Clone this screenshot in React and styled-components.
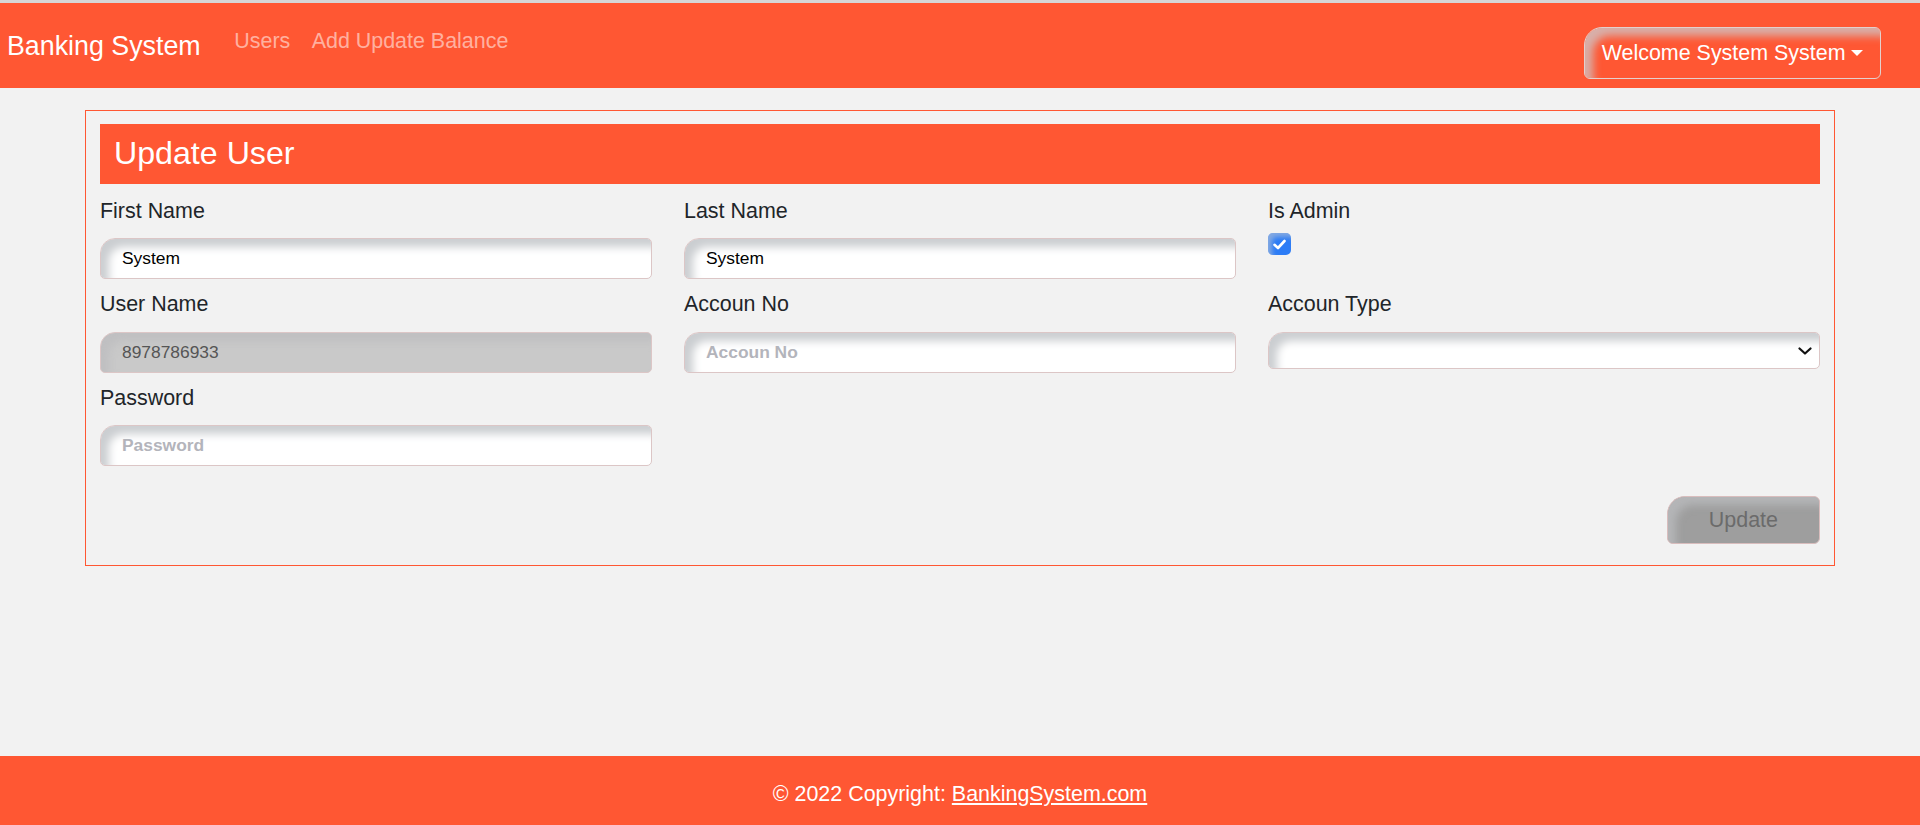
import React from 'react';
import styled, { createGlobalStyle } from 'styled-components';

const ORANGE = '#ff5733';
const FONT = '"Liberation Sans", Arial, Helvetica, sans-serif';
const INSET = 'inset 8px 8px 8px #cbced1';

const GlobalStyle = createGlobalStyle`
    html, body {
        margin: 0;
        padding: 0;
        overflow: hidden;
    }
    body {
        background: #f2f2f2;
        font-family: ${FONT};
        color: #212529;
    }
    *, *::before, *::after {
        box-sizing: border-box;
    }
`;

const Page = styled.div`
    display: flex;
    flex-direction: column;
    height: 825px;
    border-top: 3px solid #d6d6d6;
`;

const Navbar = styled.nav`
    flex: 0 0 85px;
    display: flex;
    align-items: flex-start;
    padding: 21px 39px 0 7px;
    background: ${ORANGE};
`;

const Brand = styled.a`
    margin: 2px 23px 0 0;
    font-size: 26.8px;
    line-height: 40px;
    color: #fff;
    text-decoration: none;
    white-space: nowrap;
`;

const NavLinks = styled.div`
    display: flex;
    margin-top: 1px;
`;

const NavLink = styled.a`
    padding: 0 10.7px;
    font-size: 21.44px;
    line-height: 32px;
    color: rgba(255, 255, 255, 0.55);
    text-decoration: none;
    white-space: nowrap;
`;

const UserMenu = styled.button`
    display: flex;
    align-items: center;
    height: 52px;
    margin: 3px 0 0 auto;
    padding: 9px 17px;
    border: 1px solid rgba(225, 222, 222, 0.9);
    border-radius: 18px 6px 6px 6px;
    background: transparent;
    box-shadow: inset 8px 8px 8px rgba(203, 206, 209, 0.75);
    font-family: ${FONT};
    font-size: 21.44px;
    line-height: 32px;
    color: #fff;
    cursor: pointer;
`;

const Caret = styled.span`
    display: inline-block;
    margin-left: 5.5px;
    border-top: 6.4px solid #fff;
    border-left: 6.4px solid transparent;
    border-right: 6.4px solid transparent;
`;

const Main = styled.main`
    flex: 1;
    padding-top: 22px;
`;

const Card = styled.section`
    width: 1750px;
    margin: 0 auto;
    padding: 13px 14px 21px;
    border: 1px solid ${ORANGE};
`;

const CardTitle = styled.h4`
    height: 60px;
    margin: 0;
    padding: 9.5px 14px;
    background: ${ORANGE};
    font-size: 32.16px;
    font-weight: 400;
    line-height: 38.6px;
    color: #fff;
`;

const FormGrid = styled.form`
    display: grid;
    grid-template-columns: repeat(3, 552px);
    column-gap: 32px;
    align-items: start;
    padding-top: 10.5px;
`;

const Field = styled.div`
    display: flex;
    flex-direction: column;
    margin-bottom: 9px;
`;

const Label = styled.label`
    margin-bottom: ${props => props.$gap || '11.5px'};
    font-size: 21.44px;
    line-height: 32px;
    color: #212529;
`;

const TextInput = styled.input`
    width: 100%;
    height: 41px;
    padding: 0 21px;
    border: 1px solid #dcc6c6;
    border-radius: 15px 5px 5px 5px;
    background: #fff;
    box-shadow: ${INSET};
    font-family: ${FONT};
    font-size: 17.4px;
    color: #000;
    outline: none;

    &::placeholder {
        color: #b3b4bb;
        font-weight: 700;
    }

    &:disabled {
        background: #c9c9c9;
        box-shadow: inset 8px 8px 8px rgba(185, 185, 188, 0.6);
        color: #555;
    }
`;

const CheckBox = styled.span`
    display: flex;
    align-items: center;
    justify-content: center;
    width: 23px;
    height: 22px;
    border-radius: 5px;
    background: #2c7cf6;
    box-shadow: inset 4px 4px 5px rgba(203, 206, 209, 0.55);
`;

const SelectWrap = styled.div`
    position: relative;
    width: 100%;
`;

const Select = styled.select`
    display: block;
    width: 100%;
    height: 37px;
    padding: 0 30px 0 21px;
    border: 1px solid #dcc6c6;
    border-radius: 15px 5px 5px 5px;
    background: #fff;
    box-shadow: ${INSET};
    font-family: ${FONT};
    font-size: 17.4px;
    appearance: none;
    outline: none;
`;

const Chevron = styled.svg`
    position: absolute;
    right: 8px;
    top: 15px;
    pointer-events: none;
`;

const Actions = styled.div`
    grid-column: 1 / -1;
    display: flex;
    justify-content: flex-end;
    margin-top: 21px;
`;

const SubmitButton = styled.button`
    height: 48px;
    padding: 7px 41px;
    border: 1px solid #d9bdbd;
    border-radius: 18px 6px 6px 6px;
    background: #9e9e9e;
    box-shadow: inset 8px 8px 8px rgba(203, 206, 209, 0.5);
    font-family: ${FONT};
    font-size: 21.44px;
    line-height: 32px;
    color: #6b6b6b;
`;

const Footer = styled.footer`
    flex: 0 0 69px;
    padding-top: 21.5px;
    background: ${ORANGE};
    text-align: center;
    font-size: 21.44px;
    line-height: 32px;
    color: #fff;

    a {
        color: #fff;
        text-decoration: underline;
    }
`;

const TextField = ({ label, ...inputProps }) => (
    <Field>
        <Label>{label}</Label>
        <TextInput {...inputProps} />
    </Field>
);

const App = () => (
    <>
        <GlobalStyle />
        <Page>
            <Navbar>
                <Brand href="#">Banking System</Brand>
                <NavLinks>
                    <NavLink href="#">Users</NavLink>
                    <NavLink href="#">Add Update Balance</NavLink>
                </NavLinks>
                <UserMenu type="button">
                    Welcome System System
                    <Caret />
                </UserMenu>
            </Navbar>

            <Main>
                <Card>
                    <CardTitle>Update User</CardTitle>
                    <FormGrid onSubmit={e => e.preventDefault()}>
                        <TextField label="First Name" defaultValue="System" />
                        <TextField label="Last Name" defaultValue="System" />
                        <Field>
                            <Label $gap="6.5px">Is Admin</Label>
                            <CheckBox role="checkbox" aria-checked="true">
                                <svg width="13" height="11" viewBox="0 0 13 11">
                                    <path d="M1.5 5.8 L5 9 L11.5 2" fill="none" stroke="#fff"
                                        strokeWidth="2.6" strokeLinecap="round" strokeLinejoin="round" />
                                </svg>
                            </CheckBox>
                        </Field>

                        <TextField label="User Name" defaultValue="8978786933" disabled />
                        <TextField label="Accoun No" placeholder="Accoun No" />
                        <Field>
                            <Label>Accoun Type</Label>
                            <SelectWrap>
                                <Select defaultValue="">
                                    <option value="" />
                                    <option value="saving">Saving</option>
                                    <option value="current">Current</option>
                                </Select>
                                <Chevron width="14" height="8" viewBox="0 0 14 8">
                                    <path d="M1.5 1.5 L7 6.5 L12.5 1.5" fill="none" stroke="#111"
                                        strokeWidth="2.2" strokeLinecap="round" strokeLinejoin="round" />
                                </Chevron>
                            </SelectWrap>
                        </Field>

                        <TextField label="Password" type="password" placeholder="Password" />

                        <Actions>
                            <SubmitButton type="submit">Update</SubmitButton>
                        </Actions>
                    </FormGrid>
                </Card>
            </Main>

            <Footer>
                © 2022 Copyright: <a href="#">BankingSystem.com</a>
            </Footer>
        </Page>
    </>
);

export default App;
